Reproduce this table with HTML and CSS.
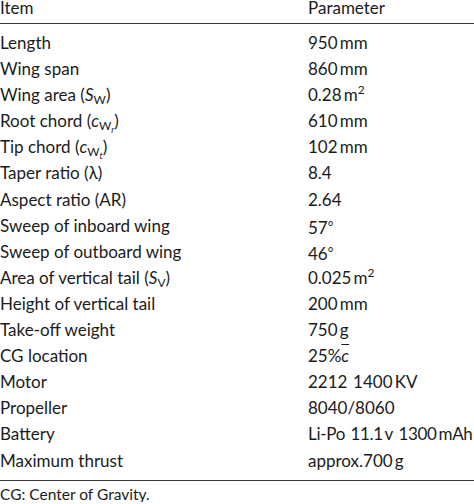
FILE: index.html
```html
<!DOCTYPE html>
<html>
<head>
<meta charset="utf-8">
<link rel="stylesheet" href="styles.css">
</head>
<body>
<div class="wrap">
  <div class="row head"><div class="c1">Item</div><div class="c2">Parameter</div></div>
  <div class="rows">
    <div class="row"><div class="c1">Length</div><div class="c2">950&#8201;mm</div></div>
    <div class="row"><div class="c1">Wing span</div><div class="c2">860&#8201;mm</div></div>
    <div class="row"><div class="c1">Wing area (<i>S</i><sub>W</sub>)</div><div class="c2">0.28&#8201;m<sup>2</sup></div></div>
    <div class="row"><div class="c1">Root chord (<i>c</i><sub>W<sub class="s2">r</sub></sub>)</div><div class="c2">610&#8201;mm</div></div>
    <div class="row"><div class="c1">Tip chord (<i>c</i><sub>W<sub class="s2">t</sub></sub>)</div><div class="c2">102&#8201;mm</div></div>
    <div class="row"><div class="c1">Taper ratio (λ)</div><div class="c2">8.4</div></div>
    <div class="row"><div class="c1">Aspect ratio (AR)</div><div class="c2">2.64</div></div>
    <div class="row"><div class="c1">Sweep of inboard wing</div><div class="c2">57<span class="deg">°</span></div></div>
    <div class="row"><div class="c1">Sweep of outboard wing</div><div class="c2">46<span class="deg">°</span></div></div>
    <div class="row"><div class="c1">Area of vertical tail (<i>S</i><sub>V</sub>)</div><div class="c2">0.025&#8201;m<sup>2</sup></div></div>
    <div class="row"><div class="c1">Height of vertical tail</div><div class="c2">200&#8201;mm</div></div>
    <div class="row"><div class="c1">Take-off weight</div><div class="c2">750&#8201;g</div></div>
    <div class="row"><div class="c1">CG location</div><div class="c2">25%<i class="cbar">c</i></div></div>
    <div class="row"><div class="c1">Motor</div><div class="c2">2212&#8196;1400&#8201;KV</div></div>
    <div class="row"><div class="c1">Propeller</div><div class="c2">8040/8060</div></div>
    <div class="row"><div class="c1">Battery</div><div class="c2 tight">Li-Po&#8196;11.1&#8201;v&#8196;1300&#8201;mAh</div></div>
    <div class="row"><div class="c1">Maximum thrust</div><div class="c2">approx.700&#8201;g</div></div>
  </div>
  <p class="note">CG: Center of Gravity.</p>
</div>
</body>
</html>
```
FILE: styles.css
```css
html, body {
  margin: 0;
  padding: 0;
  background: #ffffff;
}
body {
  font-family: "Lato", "Open Sans", sans-serif;
  color: #1b1b1b;
  overflow: hidden;
}
.wrap {
  width: 474px;
  overflow: hidden;
}
.row {
  display: flex;
  height: 26.1px;
  line-height: 26px;
  font-size: 17px;
  white-space: nowrap;
}
.c1 {
  width: 308px;
  flex-shrink: 0;
}
.c2 {
  flex: 1 0 auto;
}
.tight {
  letter-spacing: -0.3px;
}
.head {
  height: 23px;
  line-height: 15px;
  border-bottom: 1.5px solid #3a3a3a;
}
.rows {
  padding-top: 6px;
  padding-bottom: 6px;
  border-bottom: 1.5px solid #3a3a3a;
}
sub, sup {
  font-size: 0.7em;
  line-height: 0;
}
sub {
  vertical-align: -0.25em;
}
sup {
  vertical-align: 0.55em;
}
sub .s2 {
  font-size: 0.75em;
  font-style: italic;
  vertical-align: -0.3em;
}
.deg {
  font-size: 0.8em;
  vertical-align: 0.25em;
}
.cbar {
  text-decoration: overline;
}
.note {
  margin: 6px 0 0;
  font-size: 15.5px;
  line-height: 15px;
  white-space: nowrap;
}
```
